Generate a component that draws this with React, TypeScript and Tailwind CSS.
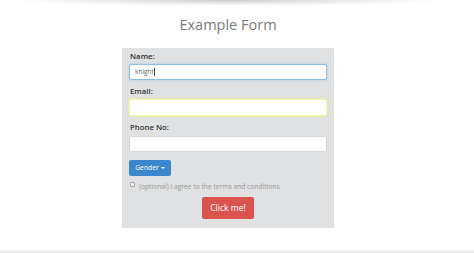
import React from "react";

export default function App() {
  return (
    <div
      className="relative w-[474px] h-[253px] bg-white overflow-hidden"
      style={{ fontFamily: '"Open Sans", "Liberation Sans", sans-serif' }}
    >
      <div className="absolute left-[10px] right-[28px] top-0 h-[6px] bg-[radial-gradient(ellipse_at_center_top,#cccccc_0%,#e8e8e8_35%,rgba(255,255,255,0)_70%)]" />
      <div className="flex flex-col items-center pt-[14px] pr-[18px]">
        <h1 className="text-[14.5px] leading-[22px] text-[#7a7a7a] font-normal">Example Form</h1>
        <div className="mt-[12px] w-[212px] h-[180px] bg-[#dfe1e2] px-[7px] pt-[3px] flex flex-col">
          <label className="text-[7.8px] font-semibold text-[#333] leading-[11px] pl-[1px]">Name:</label>
          <div className="mt-[2px] h-[16px] bg-white border border-[#8bbde6] rounded-[2px] shadow-[0_0_2px_rgba(102,175,233,0.6)] flex items-center pl-[5px]">
            <span className="text-[6.5px] text-[#666]">knight</span>
            <span className="w-[1px] h-[8px] bg-[#444]" />
          </div>
          <label className="mt-[6px] text-[7.8px] font-semibold text-[#333] leading-[11px] pl-[1px]">Email:</label>
          <div className="mt-[2px] h-[17px] bg-white border border-[#f3f5a0] rounded-[2px] shadow-[0_0_3px_rgba(240,245,120,0.9)]" />
          <label className="mt-[6px] text-[7.8px] font-semibold text-[#333] leading-[11px] pl-[1px]">Phone No:</label>
          <div className="mt-[3px] h-[16px] bg-white border border-[#d4d6d8] rounded-[2px]" />
          <div className="mt-[8px]">
            <button className="h-[16px] w-[42px] justify-center bg-[#3a87cc] rounded-[2px] text-white text-[6.8px] flex items-center gap-[2px]">
              Gender
              <span className="inline-block w-0 h-0 border-l-[2px] border-r-[2px] border-t-[2px] border-l-transparent border-r-transparent border-t-white" />
            </button>
          </div>
          <div className="mt-[5px] flex items-start gap-[4px] pl-[1px]">
            <span className="mt-[1px] w-[5px] h-[5px] border border-[#aaa] bg-[#eee] rounded-[1px]" />
            <span className="text-[6.7px] text-[#999] leading-[10px] mt-[1px]">(optional) I agree to the terms and conditions</span>
          </div>
          <div className="mt-[5px] flex justify-center">
            <button className="w-[52px] h-[22px] bg-[#d9534f] rounded-[2px] text-white text-[8.6px]">Click me!</button>
          </div>
        </div>
      </div>
      <div className="absolute left-0 right-0 bottom-0 h-[3px] bg-gradient-to-b from-[#f4f4f4] to-[#e6e6e6]" />
    </div>
  );
}
